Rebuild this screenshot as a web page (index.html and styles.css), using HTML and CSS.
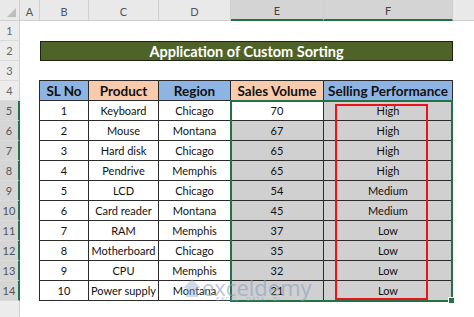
FILE: index.html
```html
<!DOCTYPE html>
<html>
<head>
<meta charset="utf-8">
<link rel="stylesheet" href="styles.css">
</head>
<body>
<div class="sheet">
  <div class="corner"><span class="tri"></span></div>
  <div class="ch">A</div>
  <div class="ch">B</div>
  <div class="ch">C</div>
  <div class="ch">D</div>
  <div class="ch sel">E</div>
  <div class="ch sel">F</div>
  <div class="ch last"></div>

  <div class="rh r1">1</div>
  <div class="rh r2">2</div>
  <div class="rh r3">3</div>
  <div class="rh r4">4</div>
  <div class="rh r5 sel">5</div>
  <div class="rh r6 sel">6</div>
  <div class="rh r7 sel">7</div>
  <div class="rh r8 sel">8</div>
  <div class="rh r9 sel">9</div>
  <div class="rh r10 sel">10</div>
  <div class="rh r11 sel">11</div>
  <div class="rh r12 sel">12</div>
  <div class="rh r13 sel">13</div>
  <div class="rh r14 sel">14</div>
  <div class="rh r15"></div>

  <div class="title">Application of Custom Sorting</div>

  <table class="data">
    <colgroup>
      <col class="c1"><col class="c2"><col class="c3"><col class="c4"><col class="c5">
    </colgroup>
    <thead>
      <tr>
        <th class="blue">SL No</th>
        <th class="peach">Product</th>
        <th class="blue">Region</th>
        <th class="peach">Sales Volume</th>
        <th class="blue">Selling Performance</th>
      </tr>
    </thead>
    <tbody>
      <tr><td>1</td><td>Keyboard</td><td>Chicago</td><td>70</td><td class="g">High</td></tr>
      <tr><td>2</td><td>Mouse</td><td>Montana</td><td class="g">67</td><td class="g">High</td></tr>
      <tr><td>3</td><td>Hard disk</td><td>Chicago</td><td class="g">65</td><td class="g">High</td></tr>
      <tr><td>4</td><td>Pendrive</td><td>Memphis</td><td class="g">65</td><td class="g">High</td></tr>
      <tr><td>5</td><td>LCD</td><td>Chicago</td><td class="g">54</td><td class="g">Medium</td></tr>
      <tr><td>6</td><td>Card reader</td><td>Montana</td><td class="g">45</td><td class="g">Medium</td></tr>
      <tr><td>7</td><td>RAM</td><td>Memphis</td><td class="g">37</td><td class="g">Low</td></tr>
      <tr><td>8</td><td>Motherboard</td><td>Chicago</td><td class="g">35</td><td class="g">Low</td></tr>
      <tr><td>9</td><td>CPU</td><td>Memphis</td><td class="g">32</td><td class="g">Low</td></tr>
      <tr><td>10</td><td>Power supply</td><td>Montana</td><td class="g">21</td><td class="g">Low</td></tr>
    </tbody>
  </table>

  <div class="selection"><span class="handle"></span></div>
  <div class="redbox"></div>
  <div class="watermark">
    <svg class="wm-logo" width="20" height="20" viewBox="0 0 20 20"><path d="M10 1 L19 10 L16 10 L16 19 L4 19 L4 10 L1 10 Z" fill="#8fa6c9" opacity="0.7"/></svg>
    <div class="wm-text"><span class="wm-big">exceldemy</span><span class="wm-small">EXCEL · DATA · BI</span></div>
  </div>
</div>
</body>
</html>
```
FILE: styles.css
```css
html, body {
  margin: 0;
  padding: 0;
  background: #ffffff;
}
.sheet {
  position: relative;
  width: 474px;
  height: 317px;
  overflow: hidden;
  display: grid;
  grid-template-columns: 20px 20px 49px 70px 72px 93px 129px 21px;
  grid-template-rows: 21px repeat(15, 20px);
  font-family: Lato, "Open Sans", sans-serif;
  background: #fff;
}
.corner {
  grid-column: 1;
  grid-row: 1;
  background: #e9e9e9;
  border-right: 1px solid #cfcfcf;
  border-bottom: 1px solid #cfcfcf;
  position: relative;
}
.tri {
  position: absolute;
  right: 3px;
  bottom: 3px;
  width: 0;
  height: 0;
  border-left: 9px solid transparent;
  border-bottom: 9px solid #bdbdbd;
}
.ch {
  grid-row: 1;
  background: #e9e9e9;
  border-right: 1px solid #cfcfcf;
  border-bottom: 1px solid #cfcfcf;
  color: #555;
  font-size: 11px;
  display: flex;
  align-items: center;
  justify-content: center;
  padding-top: 2px;
  box-sizing: border-box;
}
.ch.sel {
  background: #d4d4d4;
  border-bottom: 2px solid #217346;
  color: #444;
}
.ch.last { border-right: none; }
.rh {
  grid-column: 1;
  background: #ececec;
  border-right: 1px solid #cfcfcf;
  border-bottom: 1px solid #dadada;
  color: #666;
  font-size: 11px;
  display: flex;
  align-items: center;
  justify-content: center;
  box-sizing: border-box;
}
.rh.sel {
  background: #d6d6d6;
  border-right: 2px solid #217346;
  color: #555;
}
.r1 { grid-row: 2; } .r2 { grid-row: 3; } .r3 { grid-row: 4; } .r4 { grid-row: 5; }
.r5 { grid-row: 6; } .r6 { grid-row: 7; } .r7 { grid-row: 8; } .r8 { grid-row: 9; }
.r9 { grid-row: 10; } .r10 { grid-row: 11; } .r11 { grid-row: 12; } .r12 { grid-row: 13; }
.r13 { grid-row: 14; } .r14 { grid-row: 15; } .r15 { grid-row: 16; }

.title {
  grid-column: 3 / 8;
  grid-row: 3;
  background: #4f6228;
  border: 1px solid #1d2410;
  color: #fff;
  font-weight: bold;
  font-size: 14.5px;
  display: flex;
  align-items: center;
  justify-content: center;
  box-sizing: border-box;
}
.data {
  grid-column: 3 / 8;
  grid-row: 5 / 16;
  align-self: start;
  justify-self: start;
  border-collapse: collapse;
  table-layout: fixed;
  width: 414px;
  margin-left: -1px;
  margin-top: -1px;
}
.c1 { width: 49px; }
.c2 { width: 70px; }
.c3 { width: 72px; }
.c4 { width: 93px; }
.c5 { width: 129px; }
.data tr { height: 20px; }
.data th, .data td {
  border: 1px solid #2b2b2b;
  padding: 0;
  text-align: center;
  white-space: nowrap;
  overflow: hidden;
  color: #111;
  line-height: 18px;
}
.data th {
  font-size: 13.5px;
  font-weight: bold;
}
.data td { font-size: 11px; }
.blue { background: #8db4e2; }
.peach { background: #f8cbad; }
.data td.g { background: #d0d0d0; }
.selection {
  grid-column: 6 / 8;
  grid-row: 6 / 16;
  border: 2px solid #217346;
  margin: -1px 0 -1px -1px;
  position: relative;
  pointer-events: none;
}
.handle {
  position: absolute;
  right: -4px;
  bottom: -4px;
  width: 5px;
  height: 5px;
  background: #217346;
  border: 1px solid #fff;
}
.redbox {
  grid-column: 7;
  grid-row: 6 / 16;
  margin: 3px 25px 1px 11px;
  border: 2px solid #e8141b;
}
.watermark {
  position: absolute;
  left: 182px;
  top: 278px;
  display: flex;
  align-items: flex-start;
  gap: 0;
  opacity: 0.6;
}
.wm-text {
  display: flex;
  flex-direction: column;
  line-height: 1;
}
.wm-big {
  font-family: "Open Sans", sans-serif;
  font-size: 22px;
  color: #8aa0c4;
  line-height: 18px;
}
.wm-small {
  font-size: 6px;
  color: #9aa8c0;
  letter-spacing: 1px;
  margin-left: 14px;
}
```
